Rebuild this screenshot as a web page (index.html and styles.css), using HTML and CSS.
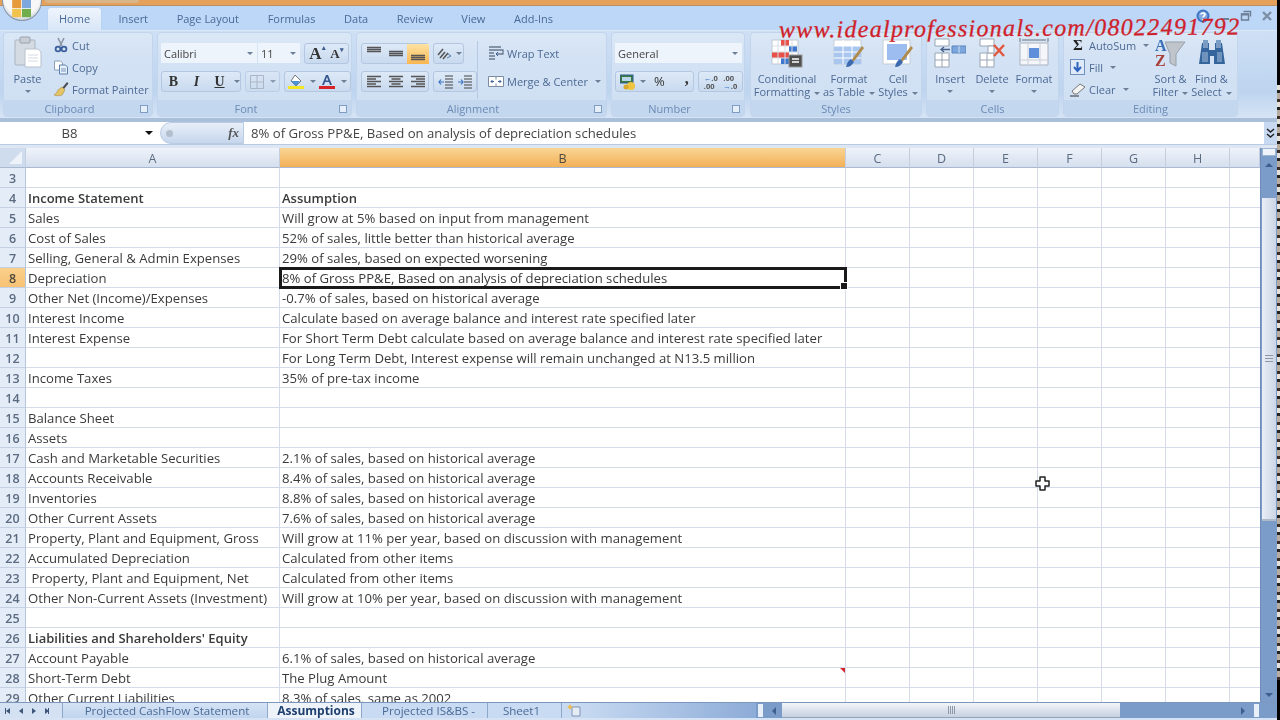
FILE: index.html
```html
<!DOCTYPE html>
<html lang="en">
  <head>
    <meta charset="UTF-8" />
    <title>Assumptions - Microsoft Excel</title>
    <link rel="stylesheet" href="styles.css">
  </head>
  <body>
    <div class="excel">
      <div class="titlebar"><div class="qat"></div></div>
      <div class="tabs">
        <span class="tab active">Home</span>
        <span class="tab">Insert</span>
        <span class="tab">Page Layout</span>
        <span class="tab">Formulas</span>
        <span class="tab">Data</span>
        <span class="tab">Review</span>
        <span class="tab">View</span>
        <span class="tab">Add-Ins</span>
        <div class="winbtns">
          <svg width="14" height="14" viewBox="0 0 14 14"><circle cx="7" cy="7" r="6.5" fill="#3f76c4"/><circle cx="7" cy="7" r="4.5" fill="#7fa8e0"/><path d="M5 5.5C5 3.6 9 3.6 9 5.6 9 7 7 7 7 8.5M7 10v1.2" fill="none" stroke="#fff" stroke-width="1.6"/></svg>
          <svg width="12" height="12" viewBox="0 0 12 12"><path d="M2 9h8" stroke="#6d7f96" stroke-width="2"/></svg>
          <svg width="12" height="12" viewBox="0 0 12 12"><path d="M3.5 1.5h7v5M1.5 4h7v6h-7z" fill="none" stroke="#6d7f96" stroke-width="1.4"/><path d="M1.5 4.5h7" stroke="#6d7f96" stroke-width="2"/></svg>
          <svg width="12" height="12" viewBox="0 0 12 12"><path d="M2 2l8 8M10 2l-8 8" stroke="#7d8ea5" stroke-width="2.4"/></svg>
        </div>
      </div>

      <div class="ribbon">
        <section class="group w-clip">
          <div class="body">
            <div class="big paste">
              <svg class="bigico" width="32" height="34" viewBox="0 0 32 34"><rect x="3" y="4" width="20" height="25" rx="1" fill="#d5dbe3" stroke="#a9b3c0"/><rect x="8" y="1" width="10" height="6" rx="1" fill="#c9ced6" stroke="#98a2af"/><path d="M13 13h13l3 3v15H13z" fill="#fff" stroke="#b7c1cd"/><path d="M16 19h10M16 22h10M16 25h10" stroke="#d5dae2"/></svg>
              <span>Paste</span>
              <i class="arrow"></i>
            </div>
            <div class="smalls clipcol">
              <div class="small"><svg class="ico" viewBox="0 0 16 16"><path d="M5 1l4 8M11 1L7 9" stroke="#8a94a3" stroke-width="1.6"/><circle cx="5" cy="12" r="2.4" fill="none" stroke="#3c5f9c" stroke-width="1.8"/><circle cx="11" cy="12" r="2.4" fill="none" stroke="#3c5f9c" stroke-width="1.8"/></svg>Cut</div>
              <div class="small"><svg class="ico" viewBox="0 0 16 16"><path d="M1.5 2h6l2 2v7h-8z" fill="#fff" stroke="#8ca0b8"/><path d="M6.5 6h6l2 2v7h-8z" fill="#e8f0fa" stroke="#5d7fae"/><path d="M8 10h5M8 12h5" stroke="#7b97bc"/></svg>Copy</div>
              <div class="small"><svg class="ico" viewBox="0 0 16 16"><path d="M9 7l5-6 1.5 1.5L11 8z" fill="#4a4f59"/><path d="M9 6l3 3-3 5c-2 1-5 1-8 0 2-1 3-3 4-5z" fill="#e5c468" stroke="#a98a3a" stroke-width=".6"/></svg>Format Painter</div>
            </div>
          </div>
          <div class="label launch">Clipboard<i class="launcher"></i></div>
        </section>

        <section class="group w-font">
          <div class="rows body">
            <div class="row">
              <div class="combo c-font">Calibri<i class="arrow"></i></div>
              <div class="combo c-size">11<i class="arrow"></i></div>
              <div class="bgroup b-grow">
                <span class="glyph grow">A<sup>&#9652;</sup></span>
                <span class="glyph shrink">A<sup>&#9662;</sup></span>
              </div>
            </div>
            <div class="row">
              <div class="bgroup b-biu">
                <b class="glyph">B</b><em class="glyph">I</em><u class="glyph">U</u><i class="arrow"></i>
              </div>
              <div class="bgroup b-border">
                <svg class="ico" viewBox="0 0 16 16"><path d="M1.5 1.5h13v13h-13zM8 1.5v13M1.5 8h13" fill="none" stroke="#9aa5b3"/></svg><i class="arrow"></i>
              </div>
              <div class="bgroup b-color">
                <svg class="ico" viewBox="0 0 16 16"><path d="M7 1l6 6-5 5-5-5z" fill="#fff" stroke="#777"/><path d="M3 7h9l-4 5z" fill="#4b93d6"/><path d="M0 12h16v3H0z" fill="#f2e726"/></svg><i class="arrow"></i>
                <svg class="ico" viewBox="0 0 16 16"><path d="M3 11L7 1h2l4 10h-2l-1-3H6l-1 3zM6.700 6.400h2.600L8 3z" fill="#35568f"/><path d="M0 12h16v3H0z" fill="#d8232a"/></svg><i class="arrow"></i>
              </div>
            </div>
          </div>
          <div class="label launch">Font<i class="launcher"></i></div>
        </section>

        <section class="group w-align">
          <div class="body">
            <div class="rows a-left">
              <div class="row">
                <div class="bgroup b-three">
                  <svg class="ali" viewBox="0 0 22 20"><path d="M4 3.500h14M4 5.500h14M4 7.500h14" stroke="#555" stroke-width="1.300"/></svg>
                  <svg class="ali" viewBox="0 0 22 20"><path d="M4 7.500h14M4 9.500h14M4 11.500h14" stroke="#555" stroke-width="1.300"/></svg>
                  <svg class="ali on" viewBox="0 0 22 20"><path d="M4 11.500h14M4 13.500h14M4 15.500h14" stroke="#555" stroke-width="1.300"/></svg>
                </div>
                <div class="bgroup b-orient">
                  <svg class="ico" viewBox="0 0 16 16"><path d="M2 9l5-6M4 12l5-6M7 13l5-6" stroke="#555" stroke-width="1.500"/><path d="M11 12l4-2-3-2" fill="none" stroke="#5b79a8"/></svg><i class="arrow"></i>
                </div>
              </div>
              <div class="row">
                <div class="bgroup b-three">
                  <svg class="ali" viewBox="0 0 22 20"><path d="M4 4.500h14M4 7h9M4 9.500h14M4 12h9M4 14.500h14" stroke="#555" stroke-width="1.400"/></svg>
                  <svg class="ali" viewBox="0 0 22 20"><path d="M4 4.500h14M6.500 7h9M4 9.500h14M6.500 12h9M4 14.500h14" stroke="#555" stroke-width="1.400"/></svg>
                  <svg class="ali" viewBox="0 0 22 20"><path d="M4 4.500h14M9 7h9M4 9.500h14M9 12h9M4 14.500h14" stroke="#555" stroke-width="1.400"/></svg>
                </div>
                <div class="bgroup b-indent">
                  <svg class="ico" viewBox="0 0 16 16"><path d="M7 2h8M7 5h8M7 8h8M7 11h8M7 14h8" stroke="#444" stroke-width="1.200"/><path d="M6 8H1M3 5.500L1 8l2 2.500" fill="none" stroke="#3a74c4" stroke-width="1.200"/></svg>
                  <svg class="ico" viewBox="0 0 16 16"><path d="M7 2h8M7 5h8M7 8h8M7 11h8M7 14h8" stroke="#444" stroke-width="1.200"/><path d="M1 8h5M4 5.500L6 8l-2 2.500" fill="none" stroke="#3a74c4" stroke-width="1.200"/></svg>
                </div>
              </div>
            </div>
            <div class="sep"></div>
            <div class="rows a-right">
              <div class="small slim"><svg class="ico" viewBox="0 0 16 16"><path d="M1 2h12M1 5h14v4H8M1 8h5M1 11h6M1 14h6" fill="none" stroke="#6a7a8f" stroke-width="1.300"/><path d="M10 11l-2-2 2-2" fill="none" stroke="#3c5f9c"/></svg>Wrap Text</div>
              <div class="small slim"><svg class="ico" viewBox="0 0 16 16"><path d="M.500 3.500h15v10H.500z" fill="#fff" stroke="#7c8ca1"/><path d="M3 8.500h3M13 8.500h-3M4.500 7L3 8.500 4.500 10M11.500 7L13 8.500 11.500 10" fill="none" stroke="#3c5f9c"/><path d="M8 3.500v3M8 10.500v3" stroke="#7c8ca1"/></svg>Merge &amp; Center<i class="arrow"></i></div>
            </div>
          </div>
          <div class="label launch">Alignment<i class="launcher"></i></div>
        </section>

        <section class="group w-number">
          <div class="rows body num">
            <div class="row"><div class="combo c-num">General<i class="arrow"></i></div></div>
            <div class="row">
              <div class="bgroup b-money">
                <svg class="ico" viewBox="0 0 16 16"><rect x="0" y="1" width="13" height="8" fill="#3c7a3a" stroke="#2b5d9c"/><path d="M2 3h9v4H2z" fill="#b9d6ee"/><circle cx="11" cy="12" r="4" fill="#eec53f"/><circle cx="6" cy="13" r="2.500" fill="#d9a92a"/></svg><i class="arrow"></i>
                <span class="glyph pct">%</span><span class="glyph comma">,</span>
              </div>
              <div class="bgroup b-dec">
                <span class="dec"><em>&larr;</em>.0<br>.00</span><span class="dec">.00<br><em>&rarr;</em>.0</span>
              </div>
            </div>
          </div>
          <div class="label launch">Number<i class="launcher"></i></div>
        </section>

        <section class="group w-styles">
          <div class="body pad3">
            <div class="big wc">
              <svg class="bigico" width="32" height="30" viewBox="0 0 32 30"><path d="M1 2h26v24H1z" fill="#fff" stroke="#c0c8d2"/><path d="M10 2h8v6h-8z" fill="#e8504a"/><path d="M10 8h8v6h8v-6h-8zM1 14h9v6H1z" fill="#3f77cf"/><path d="M1 14h17v6H1z" fill="#e8504a"/><path d="M10 20h8v6h-8z" fill="#3f77cf"/><path d="M7 2v24M14 2v24M21 2v24M1 8h26M1 14h26M1 20h26" stroke="#d9dee5"/><rect x="18" y="17" width="13" height="12" fill="#4f4f4f" stroke="#999"/><path d="M21 21h7M21 24h7" stroke="#fff" stroke-width="1.500"/></svg>
              <span>Conditional<br>Formatting<i class="arrow inl"></i></span>
            </div>
            <div class="big wt">
              <svg class="bigico" width="32" height="30" viewBox="0 0 32 30"><path d="M1 2h27v24H1z" fill="#fff" stroke="#c5ccd6"/><path d="M1 8h27v18H1z" fill="#a9c6ee"/><path d="M10 2v24M19 2v24M1 8h27M1 14h27M1 20h27" stroke="#fff"/><path d="M16 27l4-7 9-12 2 2-9 12z" fill="#b08a4a"/><path d="M13 29c1-4 2-6 5-8l3 3c-2 3-4 5-8 5z" fill="#3c6ab0"/></svg>
              <span>Format<br>as Table<i class="arrow inl"></i></span>
            </div>
            <div class="big wcell">
              <svg class="bigico" width="32" height="30" viewBox="0 0 32 30"><path d="M1 2h27v24H1z" fill="#fff" stroke="#c5ccd6"/><path d="M5 6h20v16H5z" fill="#9dbcf0"/><path d="M16 27l4-7 9-12 2 2-9 12z" fill="#b08a4a"/><path d="M13 29c1-4 2-6 5-8l3 3c-2 3-4 5-8 5z" fill="#3c6ab0"/></svg>
              <span>Cell<br>Styles<i class="arrow inl"></i></span>
            </div>
          </div>
          <div class="label">Styles</div>
        </section>

        <section class="group w-cells">
          <div class="body pad3">
            <div class="big wcl">
              <svg class="bigico" width="32" height="30" viewBox="0 0 32 30"><path d="M1 1h14v7H1zM1 15h14v14H1zM1 22h14M8 15v14" fill="#fff" stroke="#9aa5b3"/><path d="M18 8h14v7H18z" fill="#7da7dc" stroke="#5b85bd"/><path d="M25 8v7" stroke="#cfe0f5"/><path d="M16 11.500H7M10 9l-3 2.500 3 2.500" fill="none" stroke="#48628a" stroke-width="1.300"/></svg>
              <span>Insert</span><i class="arrow"></i>
            </div>
            <div class="big wcl">
              <svg class="bigico" width="32" height="30" viewBox="0 0 32 30"><path d="M4 1h14v7H4zM4 15h14v14H4zM4 22h14M11 15v14" fill="#fff" stroke="#9aa5b3"/><path d="M18 8v7h-6V8z" fill="#fff" stroke="#9aa5b3"/><path d="M18 7l10 11M28 7L18 18" stroke="#e3553d" stroke-width="2.400"/></svg>
              <span>Delete</span><i class="arrow"></i>
            </div>
            <div class="big wcl">
              <svg class="bigico" width="32" height="30" viewBox="0 0 32 30"><path d="M2 5h28v22H2z" fill="#f4f6f9" stroke="#aab3bf"/><path d="M2 0v4M30 0v4M4 2h24" stroke="#66707e"/><path d="M10 5v22M22 5v22M2 22h28" stroke="#c9d0d9"/><path d="M11 10h10v10H11z" fill="#5f8fdb"/></svg>
              <span>Format</span><i class="arrow"></i>
            </div>
          </div>
          <div class="label">Cells</div>
        </section>

        <section class="group w-edit">
          <div class="body">
            <div class="smalls esm">
              <div class="small"><span class="sigma">&Sigma;</span>AutoSum<i class="arrow"></i></div>
              <div class="small"><svg class="ico" viewBox="0 0 16 16"><rect x=".5" y=".5" width="14" height="15" fill="#dfe9f7" stroke="#6f90bd"/><path d="M7.500 3v8M4 8l3.500 4L11 8" fill="none" stroke="#2e63c0" stroke-width="2"/></svg>Fill<i class="arrow"></i></div>
              <div class="small"><svg class="ico" viewBox="0 0 16 16"><path d="M2 10l8-7 5 3-8 7H4z" fill="#f3f3f3" stroke="#777"/><path d="M0 15h9" stroke="#333"/></svg>Clear<i class="arrow"></i></div>
            </div>
            <div class="big we">
              <svg class="bigico" width="32" height="30" viewBox="0 0 32 30"><path d="M10 4l12 0 8 0-9 12v12l-6-3v-9z" fill="#c0c5cc" stroke="#98a0aa"/><text x="0" y="13" class="az a">A</text><text x="0" y="28" class="az z">Z</text></svg>
              <span>Sort &amp;<br>Filter<i class="arrow inl"></i></span>
            </div>
            <div class="big we">
              <svg class="bigico" width="32" height="30" viewBox="0 0 32 30"><path d="M6 5h7v7h6V5h7l3 21H18v-8h-4v8H3z" fill="#34659c"/><path d="M7 2h5v8H7zM20 2h5v8h-5z" fill="#7a9cc4"/><path d="M6 14h6v10H6zM21 14h5v10h-5z" fill="#6f93bd"/></svg>
              <span>Find &amp;<br>Select<i class="arrow inl"></i></span>
            </div>
          </div>
          <div class="label">Editing</div>
        </section>
      </div>

      <div class="formula">
        <div class="namebox">B8<i class="arrow dark"></i></div>
        <div class="fxpill"><span class="knob"></span><em>fx</em></div>
        <div class="fxinput">8% of Gross PP&amp;E, Based on analysis of depreciation schedules</div>
        <div class="fxexpand"><svg width="9" height="10" viewBox="0 0 9 10"><path d="M1 1l3.500 3L8 1M1 6l3.500 3L8 6" fill="none" stroke="#222" stroke-width="1.500"/></svg></div>
      </div>
      <div class="gap"></div>

      <div class="sheet">
        <div class="cells">
          <table>
            <colgroup>
              <col class="c-head"><col class="c-a"><col class="c-b">
              <col class="c-n"><col class="c-n"><col class="c-n"><col class="c-n"><col class="c-n"><col class="c-n"><col>
            </colgroup>
            <tr class="colhead">
              <th class="corner"><i></i></th><th>A</th><th class="sel">B</th>
              <th>C</th><th>D</th><th>E</th><th>F</th><th>G</th><th>H</th><th></th>
            </tr>
            <tr><th>3</th><td></td><td></td><td class="rest" colspan="7"></td></tr>
            <tr><th>4</th><td><b>Income Statement</b></td><td><b>Assumption</b></td><td class="rest" colspan="7"></td></tr>
            <tr><th>5</th><td>Sales</td><td>Will grow at 5% based on input from management</td><td class="rest" colspan="7"></td></tr>
            <tr><th>6</th><td>Cost of Sales</td><td>52% of sales, little better than historical average</td><td class="rest" colspan="7"></td></tr>
            <tr><th>7</th><td>Selling, General &amp; Admin Expenses</td><td>29% of sales, based on expected worsening</td><td class="rest" colspan="7"></td></tr>
            <tr><th class="sel">8</th><td>Depreciation</td><td class="active">8% of Gross PP&amp;E, Based on analysis of depreciation schedules</td><td class="rest" colspan="7"></td></tr>
            <tr><th>9</th><td>Other Net (Income)/Expenses</td><td>-0.7% of sales, based on historical average</td><td class="rest" colspan="7"></td></tr>
            <tr><th>10</th><td>Interest Income</td><td>Calculate based on average balance and interest rate specified later</td><td class="rest" colspan="7"></td></tr>
            <tr><th>11</th><td>Interest Expense</td><td>For Short Term Debt calculate based on average balance and interest rate specified later</td><td class="rest" colspan="7"></td></tr>
            <tr><th>12</th><td></td><td>For Long Term Debt, Interest expense will remain unchanged at N13.5 million</td><td class="rest" colspan="7"></td></tr>
            <tr><th>13</th><td>Income Taxes</td><td>35% of pre-tax income</td><td class="rest" colspan="7"></td></tr>
            <tr><th>14</th><td></td><td></td><td class="rest" colspan="7"></td></tr>
            <tr><th>15</th><td>Balance Sheet</td><td></td><td class="rest" colspan="7"></td></tr>
            <tr><th>16</th><td>Assets</td><td></td><td class="rest" colspan="7"></td></tr>
            <tr><th>17</th><td>Cash and Marketable Securities</td><td>2.1% of sales, based on historical average</td><td class="rest" colspan="7"></td></tr>
            <tr><th>18</th><td>Accounts Receivable</td><td>8.4% of sales, based on historical average</td><td class="rest" colspan="7"></td></tr>
            <tr><th>19</th><td>Inventories</td><td>8.8% of sales, based on historical average</td><td class="rest" colspan="7"></td></tr>
            <tr><th>20</th><td>Other Current Assets</td><td>7.6% of sales, based on historical average</td><td class="rest" colspan="7"></td></tr>
            <tr><th>21</th><td>Property, Plant and Equipment, Gross</td><td>Will grow at 11% per year, based on discussion with management</td><td class="rest" colspan="7"></td></tr>
            <tr><th>22</th><td>Accumulated Depreciation</td><td>Calculated from other items</td><td class="rest" colspan="7"></td></tr>
            <tr><th>23</th><td>&nbsp;Property, Plant and Equipment, Net</td><td>Calculated from other items</td><td class="rest" colspan="7"></td></tr>
            <tr><th>24</th><td>Other Non-Current Assets (Investment)</td><td>Will grow at 10% per year, based on discussion with management</td><td class="rest" colspan="7"></td></tr>
            <tr><th>25</th><td></td><td></td><td class="rest" colspan="7"></td></tr>
            <tr><th>26</th><td><b>Liabilities and Shareholders' Equity</b></td><td></td><td class="rest" colspan="7"></td></tr>
            <tr><th>27</th><td>Account Payable</td><td>6.1% of sales, based on historical average</td><td class="rest" colspan="7"></td></tr>
            <tr><th>28</th><td>Short-Term Debt</td><td class="comment">The Plug Amount</td><td class="rest" colspan="7"></td></tr>
            <tr><th>29</th><td>Other Current Liabilities</td><td>8.3% of sales, same as 2002</td><td class="rest" colspan="7"></td></tr>
          </table>
        </div>
        <div class="vscroll">
          <div class="vsplit"></div>
          <div class="vtrack top"><i class="up"></i></div>
          <div class="vthumb"><span></span></div>
          <div class="vtrack"><i class="down"></i></div>
        </div>
      </div>

      <div class="sheettabs">
        <div class="nav">
          <i class="nl bar"></i><i class="nl"></i><i class="nr"></i><i class="nr bar"></i>
        </div>
        <div class="stab t1">Projected CashFlow Statement</div>
        <div class="stab t2">Assumptions</div>
        <div class="stab t3">Projected IS&amp;BS -</div>
        <div class="stab t4">Sheet1</div>
        <div class="stab t5"><svg width="14" height="13" viewBox="0 0 14 13"><path d="M5 3h8v9H5z" fill="#e6ecf5" stroke="#7e93b3"/><path d="M3 0l1 2 2 1-2 1-1 2-1-2-2-1 2-1z" fill="#efb93f"/></svg></div>
        <div class="hscroll">
          <i class="grip"></i><i class="hl"></i>
          <div class="hthumb"><span></span></div>
          <i class="hr"></i><i class="grip end"></i>
        </div>
      </div>
      <div class="statusline"></div>
    </div>
    <div class="edge"></div>

    <!-- things that sit on top of the window -->
    <div class="officebtn">
      <svg width="22" height="18" viewBox="0 0 26 22"><rect x="1" y="0" width="11" height="10" fill="#e79a3c"/><rect x="13" y="0" width="11" height="10" fill="#7ea8dc"/><rect x="1" y="11" width="11" height="10" fill="#f1c34c"/><rect x="13" y="11" width="11" height="10" fill="#6fae4a"/></svg>
    </div>
    <div class="watermark">www.idealprofessionals.com/08022491792</div>
    <svg class="cursor" width="15" height="15" viewBox="0 0 15 15"><path d="M5 1h5v4h4v5h-4v4H5v-4H1V5h4z" fill="#fff" stroke="#222" stroke-width="1.500" stroke-linejoin="round"/></svg>
  </body>
</html>
```

FILE: styles.css
```css
* {
  box-sizing: border-box;
}

html,
body {
  margin: 0;
  padding: 0;
  width: 1280px;
  height: 720px;
  overflow: hidden;
}

body {
  display: flex;
  font-family: "Open Sans", sans-serif;
  font-size: 11px;
  color: #4d6a94;
  background-color: #000;
}

.excel {
  width: 1277px;
  height: 720px;
  display: flex;
  flex-direction: column;
  background-color: #c5daf4;
  /* the source is a soft video frame */
  filter: blur(0.35px);
}

.edge {
  width: 3px;
  height: 720px;
  background: linear-gradient(#000 0 85px, transparent 85px 680px, #000 680px),
    repeating-linear-gradient(#e4e0da 0 5px, #222 5px 8px, #b7aca0 8px 14px, #3a2d28 14px 17px);
}

i {
  font-style: normal;
}

/* top of the window */
.titlebar {
  height: 6px;
  flex: none;
  background-color: #e5a05c;
  border-bottom: 1px solid #b9905f;
}

.qat {
  width: 94px;
  height: 3px;
  margin-left: 45px;
  background-color: #d9b58a;
  border-radius: 0 0 8px 8px;
}

.tabs {
  height: 24px;
  flex: none;
  display: flex;
  align-items: flex-end;
  padding-left: 48px;
  background: linear-gradient(#bcd7f8, #bdd7f7);
  font-size: 11px;
  color: #496a96;
}

.tab {
  height: 22px;
  padding: 0 14.300px;
  line-height: 22px;
}

.tab.active {
  padding: 0 11px;
  margin-right: 3px;
  background: linear-gradient(#eef4fc, #d9e7f7);
  border-radius: 3px 3px 0 0;
  box-shadow: 0 0 1px #9db9dc;
}

.winbtns {
  display: flex;
  align-items: center;
  gap: 9px;
  margin-left: auto;
  height: 24px;
  padding-right: 4px;
  margin-bottom: 2px;
}

/* ribbon */
.ribbon {
  height: 88px;
  flex: none;
  display: flex;
  gap: 4px;
  padding: 2px 0 1px 3px;
  background: linear-gradient(#cfe0f5, #bdd4ef 70%, #d6e4f5);
  box-shadow: inset 0 1px 0 #dbe8f8;
}

.group {
  position: relative;
  display: flex;
  flex-direction: column;
  border: 1px solid #c2d5ec;
  border-radius: 4px;
  background: linear-gradient(#dae7f6, #d3e2f4 30%, #cfdff3);
  height: 85px;
}

.w-clip {
  width: 150px;
}

.w-font {
  width: 195px;
}

.w-align {
  width: 251px;
}

.w-number {
  width: 134px;
  margin-right: 1px;
}

.w-styles {
  width: 172px;
}

.w-cells {
  width: 133px;
}

.w-edit {
  width: 175px;
}

.body {
  flex: 1;
  display: flex;
  min-height: 0;
}

.label {
  height: 16px;
  flex: none;
  text-align: center;
  line-height: 17px;
  color: #6c8bb5;
  background-color: #c3d7ef;
  border-radius: 0 0 3px 3px;
}

.label.launch {
  padding-right: 17px;
}

.launcher {
  position: absolute;
  right: 4px;
  bottom: 3px;
  width: 8px;
  height: 8px;
  border: 1px solid #7f9cc3;
  background-color: #e6eefa;
}

.pad3 {
  padding-left: 2px;
}

.rows {
  display: flex;
  flex-direction: column;
  gap: 8px;
  padding-top: 10px;
}

.rows.body {
  padding-left: 3px;
}

.row {
  display: flex;
  height: 20px;
  gap: 4px;
}

.big {
  display: flex;
  flex-direction: column;
  align-items: center;
  padding-top: 3px;
  line-height: 13px;
  text-align: center;
  white-space: nowrap;
  color: #4d6a94;
}

.bigico {
  height: 34px;
  flex: none;
  margin-bottom: 2px;
}

.paste {
  width: 47px;
}

.wc {
  width: 68px;
}

.wt {
  width: 56px;
}

.wcell {
  width: 42px;
}

.wcl {
  width: 42px;
}

.we {
  width: 41px;
}

.smalls {
  display: flex;
  flex-direction: column;
  padding-top: 1px;
}

.clipcol {
  padding-left: 2px;
}

.esm {
  width: 86px;
  padding-left: 6px;
}

.small {
  height: 22px;
  display: flex;
  align-items: center;
  gap: 3px;
  white-space: nowrap;
  color: #4d6a94;
}

.small.slim {
  height: 20px;
}

.ico {
  width: 16px;
  height: 16px;
  flex: none;
}

.ali {
  width: 22px;
  height: 20px;
  flex: none;
}

.ali.on {
  background: linear-gradient(#fde3a4, #f9b64f);
}

.sigma {
  width: 16px;
  text-align: center;
  font-family: "Liberation Serif", serif;
  font-size: 15px;
  font-weight: bold;
  color: #222;
}

.arrow {
  display: inline-block;
  width: 0;
  height: 0;
  margin-left: 4px;
  border-left: 3px solid transparent;
  border-right: 3px solid transparent;
  border-top: 3px solid #6d7f96;
}

.arrow.inl {
  vertical-align: middle;
}

.paste .arrow,
.wcl .arrow {
  margin: 5px 0 0;
}

.combo {
  height: 20px;
  display: flex;
  align-items: center;
  justify-content: space-between;
  padding: 0 4px 0 3px;
  background-color: #eef4fc;
  font-size: 11px;
  color: #444;
}

.c-font {
  width: 96px;
}

.c-size {
  width: 42px;
  margin-left: -3px;
}

.c-num {
  width: 127px;
}

.bgroup {
  height: 21px;
  display: flex;
  align-items: center;
  justify-content: space-around;
  padding: 0 2px;
  border: 1px solid #b3c7e0;
  border-radius: 3px;
  background: linear-gradient(#dde9f7, #c9daef);
}

.b-grow {
  width: 45px;
}

.b-biu {
  width: 80px;
  padding: 0;
  justify-content: flex-start;
}

.b-biu .glyph {
  width: 23px;
  text-align: center;
}

.b-biu .arrow {
  margin-left: 3px;
}

.b-border {
  width: 35px;
  opacity: 0.7;
}

.b-color {
  width: 67px;
}

.b-three {
  width: 68px;
  padding: 0 1px;
  justify-content: flex-start;
}

.b-orient {
  width: 31px;
}

.b-indent {
  width: 44px;
}

.b-money {
  width: 79px;
  padding: 0 0 0 4px;
  justify-content: flex-start;
}

.b-dec {
  width: 45px;
}

.glyph {
  font-family: "Liberation Serif", serif;
  font-size: 14px;
  font-weight: bold;
  color: #333;
  line-height: 1;
}

.grow {
  font-size: 17px;
}

.shrink {
  font-size: 13px;
}

.glyph sup {
  font-size: 7px;
  color: #3d5f8e;
  vertical-align: top;
}

.pct {
  margin-left: 8px;
  font-family: "Open Sans", sans-serif;
  font-weight: normal;
  font-size: 13px;
}

.comma {
  margin-left: 20px;
  margin-top: -6px;
  font-size: 16px;
}

.dec {
  font-size: 7.500px;
  line-height: 8px;
  font-weight: 700;
  color: #555;
  white-space: nowrap;
}

.dec em {
  font-style: normal;
  color: #3a74c4;
}

.a-left {
  width: 120px;
  padding-left: 4px;
}

.a-right {
  padding-left: 10px;
}

.sep {
  width: 1px;
  height: 58px;
  margin-top: 8px;
  background-color: #b6c9e2;
}

.az {
  font-family: "Liberation Serif", serif;
  font-size: 16px;
  font-weight: bold;
}

.az.a {
  fill: #3b6fb5;
}

.az.z {
  fill: #a8413c;
}

/* formula bar */
.formula {
  height: 22px;
  flex: none;
  display: flex;
  align-items: stretch;
  margin-top: 4px;
  background-color: #fff;
  font-size: 13.150px;
  color: #444;
}

.ribbon + .formula {
  box-shadow: 0 -4px 0 #a9bfda;
}

.namebox {
  width: 155px;
  display: flex;
  align-items: center;
  justify-content: center;
  position: relative;
  padding-right: 16px;
}

.arrow.dark {
  position: absolute;
  right: 2px;
  top: 9px;
  border-top: 4px solid #111;
  border-left-width: 4px;
  border-right-width: 4px;
}

.fxpill {
  width: 84px;
  margin-left: 5px;
  display: flex;
  align-items: center;
  justify-content: space-between;
  padding: 0 4px 0 5px;
  border-radius: 11px 0 0 11px;
  background: linear-gradient(#e8eff9, #c6d6ec);
  border: 1px solid #b9cce4;
}

.fxpill em {
  font-family: "Liberation Serif", serif;
  font-weight: bold;
  font-size: 13px;
  color: #555;
}

.knob {
  width: 7px;
  height: 7px;
  border-radius: 50%;
  background-color: #b4bfcd;
}

.fxinput {
  flex: 1;
  padding-left: 7px;
  line-height: 22px;
  white-space: nowrap;
}

.fxexpand {
  width: 13px;
  display: flex;
  align-items: center;
  justify-content: center;
  background-color: #c6d9f1;
}

.gap {
  height: 4px;
  flex: none;
  background-color: #dde7f3;
  border-top: 1px solid #b8cbe2;
}

/* the grid */
.sheet {
  height: 554px;
  flex: none;
  display: flex;
}

.cells {
  width: 1260px;
  height: 554px;
  overflow: hidden;
  background-color: #fff;
}

table {
  width: 1260px;
  table-layout: fixed;
  border-collapse: separate;
  border-spacing: 0;
  font-size: 13.150px;
  color: #3a3a3a;
}

.c-head {
  width: 26px;
}

.c-a {
  width: 254px;
}

.c-b {
  width: 566px;
}

.c-n {
  width: 64px;
}

tr {
  height: 20px;
}

td {
  height: 20px;
  padding: 1px 2px 0;
  white-space: nowrap;
  overflow: hidden;
  border-right: 1px solid #d5dbe8;
  border-bottom: 1px solid #d5dbe8;
}

td b {
  font-size: 13px;
  font-weight: 600;
}

th {
  height: 20px;
  padding: 1px 0 0;
  font-weight: 600;
  font-size: 12.500px;
  color: #5b6b80;
  background-color: #e4ecf7;
  border-right: 1px solid #b5c6dc;
  border-bottom: 1px solid #c3d1e3;
}

.colhead th {
  background: linear-gradient(#eff3fa, #d5dfee);
  border-right: 1px solid #c3cfdf;
  border-bottom: 1px solid #a9bad0;
  font-weight: 400;
}

.colhead th.sel,
th.sel {
  background: linear-gradient(#f9d593, #f3b057);
  color: #4f4a3e;
}

th.sel {
  background: linear-gradient(#f9d08a, #f8c274);
}

.corner {
  position: relative;
}

.colhead .corner {
  background: #cfdcee;
}

.corner i {
  position: absolute;
  right: 3px;
  bottom: 3px;
  border-left: 13px solid transparent;
  border-bottom: 13px solid #eef3fa;
}

.rest {
  padding: 0;
  border-right: 0;
  background-image: repeating-linear-gradient(to right, transparent 0 63px, #d5dbe8 63px 64px);
}

td.active {
  position: relative;
  overflow: visible;
  outline: 3px solid #1a1a1a;
  outline-offset: -2px;
}

td.active::after {
  content: "";
  position: absolute;
  right: -3px;
  bottom: -3px;
  width: 6px;
  height: 6px;
  background-color: #1a1a1a;
  border: 1px solid #fff;
}

td.comment {
  position: relative;
}

td.comment::after {
  content: "";
  position: absolute;
  top: 0;
  right: 0;
  border-top: 5px solid #d8232a;
  border-left: 5px solid transparent;
}

/* scrollbars */
.vscroll {
  width: 17px;
  height: 554px;
  display: flex;
  flex-direction: column;
  padding: 0 1px 0 1px;
  border-left: 1px solid #6f8db8;
  background-color: #7b9bc8;
}

.vsplit {
  height: 8px;
  background-color: #f0f4fa;
  border: 1px solid #9fb4d0;
}

.vtrack {
  flex: 1;
  display: flex;
  align-items: flex-end;
  justify-content: center;
  padding-bottom: 5px;
}

.vtrack.top {
  flex: none;
  height: 42px;
  align-items: flex-start;
  padding: 7px 0 0;
}

.up,
.down {
  border-left: 4px solid transparent;
  border-right: 4px solid transparent;
}

.up {
  border-bottom: 4px solid #3e5f90;
}

.down {
  border-top: 4px solid #3e5f90;
}

.vthumb {
  height: 323px;
  flex: none;
  display: flex;
  align-items: center;
  justify-content: center;
  background: linear-gradient(to right, #eaeef6, #cbd5e6);
  border-bottom: 2px solid #aeb9ca;
}

.vthumb span {
  width: 8px;
  height: 7px;
  background: repeating-linear-gradient(#8d98a8 0 1px, transparent 1px 3px);
}

.sheettabs {
  height: 16px;
  flex: none;
  display: flex;
  align-items: stretch;
  background: linear-gradient(to right, #c9dbf2 45%, #8eacd8 59%);
  border-top: 1px solid #7c97bd;
  font-size: 11.600px;
  line-height: 15px;
  color: #4a6a96;
}

.nav {
  width: 62px;
  display: flex;
  align-items: center;
  gap: 9px;
  padding-left: 6px;
  background-color: #d3e1f3;
}

.nl,
.nr {
  position: relative;
  border-top: 3px solid transparent;
  border-bottom: 3px solid transparent;
}

.nl {
  border-right: 4px solid #3e5678;
}

.nr {
  border-left: 4px solid #3e5678;
}

.nl.bar::before,
.nr.bar::before {
  content: "";
  position: absolute;
  top: -3px;
  left: -1px;
  width: 1px;
  height: 6px;
  background-color: #3e5678;
}

.stab {
  white-space: nowrap;
  text-align: center;
  border-right: 1px solid #8ea8cb;
}

.t1 {
  width: 206px;
  background: linear-gradient(#d5e3f5, #c1d5ee);
  border-left: 1px solid #8ea8cb;
  padding-left: 4px;
}

.t2 {
  width: 94px;
  font-size: 12px;
  font-weight: 700;
  color: #1f406f;
  background-color: #eef3fa;
  padding-left: 3px;
}

.t3 {
  width: 126px;
  padding-left: 8px;
}

.t4 {
  width: 74px;
  padding-right: 6px;
}

.t5 {
  width: 30px;
  padding-top: 1px;
  padding-right: 6px;
  border-right: 0;
}

.hscroll {
  margin-left: auto;
  width: 521px;
  display: flex;
  align-items: center;
  background-color: #7b9bc8;
}

.grip {
  width: 5px;
  height: 13px;
  margin-left: 2px;
  background-color: #e9eff8;
}

.grip.end {
  margin-left: 9px;
}

.hl,
.hr {
  border-top: 4px solid transparent;
  border-bottom: 4px solid transparent;
}

.hl {
  margin: 0 6px 0 9px;
  border-right: 4px solid #3e5f90;
}

.hr {
  margin-left: 121px;
  border-left: 4px solid #3e5f90;
}

.hthumb {
  width: 338px;
  height: 15px;
  display: flex;
  align-items: center;
  justify-content: center;
  background: linear-gradient(#f3f5f9, #c6d0e0);
  border-bottom: 1px solid #93a4bd;
}

.hthumb span {
  width: 7px;
  height: 8px;
  background: repeating-linear-gradient(to right, #8d98a8 0 1px, transparent 1px 2px);
}

.statusline {
  height: 2px;
  flex: none;
  background-color: #d6e3f4;
}

/* overlays */
.officebtn {
  position: absolute;
  left: 2px;
  top: -20px;
  width: 40px;
  height: 41px;
  display: flex;
  align-items: center;
  justify-content: center;
  padding-top: 16px;
  border-radius: 50%;
  background: radial-gradient(circle at 50% 40%, #f7f7f7 60%, #9aa7b5 100%);
  border: 1px solid #8494a7;
}

.watermark {
  position: absolute;
  left: 779px;
  top: 15px;
  white-space: nowrap;
  font-family: "Liberation Serif", serif;
  font-style: italic;
  font-size: 24px;
  -webkit-text-stroke: 0.3px #cf1f2b;
  letter-spacing: 1.300px;
  color: #cf1f2b;
  transform: rotate(-0.4deg);
}

.cursor {
  position: absolute;
  left: 1035px;
  top: 476px;
}
```
